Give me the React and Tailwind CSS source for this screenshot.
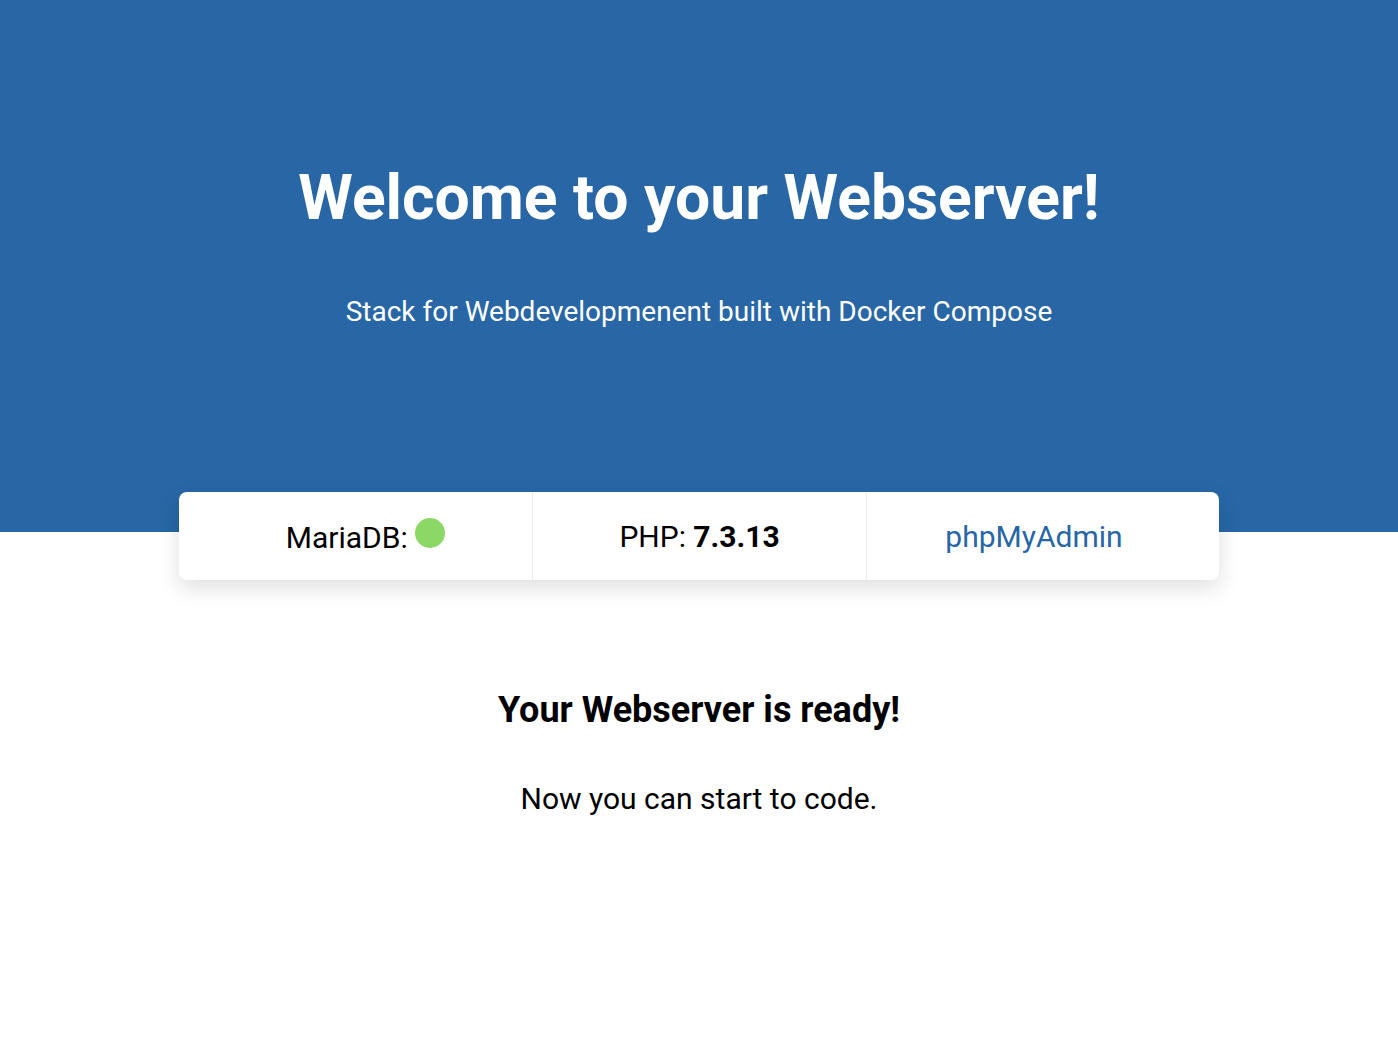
import React from 'react';

const font = { fontFamily: 'Roboto, "Noto Sans", sans-serif' };

const StatusBar = () => {
  return (
    <div className="relative z-10 mx-auto -mt-[40px] w-[1040px] h-[88px] bg-white rounded-lg shadow-[0_8px_22px_rgba(0,0,0,0.13)] grid grid-cols-[353px_1px_333px_1px_352px]">
      <div className="flex items-center justify-center pl-[20px] pt-[3px] text-[30px] leading-none text-black">
        <span>
          MariaDB:{' '}
          <span className="inline-block w-[30px] h-[30px] -mt-[6px] rounded-full bg-[#8cd867] align-baseline"></span>
        </span>
      </div>
      <div className="bg-[#ededed]"></div>
      <div className="flex items-center justify-center pt-[2px] text-[30px] leading-none text-black">
        <span>
          PHP: <span className="font-bold">7.3.13</span>
        </span>
      </div>
      <div className="bg-[#ededed]"></div>
      <div className="flex items-center justify-center pr-[18px] pt-[2px] text-[30px] leading-none">
        <a href="#" className="text-[#2866a6]">phpMyAdmin</a>
      </div>
    </div>
  );
};

const App = () => {
  return (
    <div className="min-h-screen bg-white" style={font}>
      <section className="h-[532px] bg-[#2866a6] pt-[167px] flex flex-col items-center text-white">
        <h1 className="text-[62.4px] font-bold leading-none">Welcome to your Webserver!</h1>
        <p className="mt-[69px] text-[28px] leading-none">Stack for Webdevelopmenent built with Docker Compose</p>
      </section>

      <StatusBar />

      <div className="flex flex-col items-center pt-[112px] text-black">
        <h2 className="text-[36px] font-bold leading-none">Your Webserver is ready!</h2>
        <p className="mt-[56px] text-[30px] leading-none">Now you can start to code.</p>
      </div>
    </div>
  );
};

export default App;
